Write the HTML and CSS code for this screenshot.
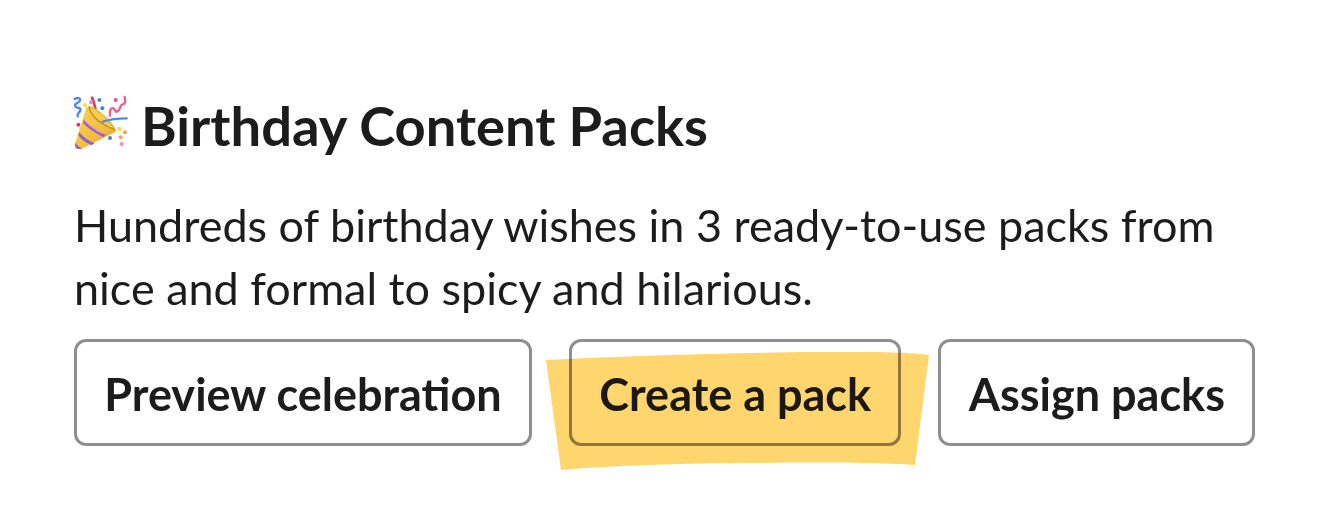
FILE: index.html
```html
<!DOCTYPE html>
<html lang="en">
<head>
    <meta charset="UTF-8">
    <title>Birthday Content Packs</title>
    <link rel="stylesheet" href="styles.css">
</head>
<body>
    <div class="card">
        <h1 class="title">
            <svg class="party-icon" viewBox="30 25 180 165" aria-hidden="true">
                <defs>
                    <linearGradient id="coneFill" x1="0" y1="0" x2="1" y2="1">
                        <stop offset="0" stop-color="#f9d25e"/>
                        <stop offset="0.6" stop-color="#f2bd3e"/>
                        <stop offset="1" stop-color="#dfa12e"/>
                    </linearGradient>
                </defs>
                <!-- streamers behind the cone -->
                <path d="M44 40c10-6 20-2 15 6s-18 8-13 16 18 2 15 12-12 8-8 18" fill="none" stroke="#4a86ea" stroke-width="7" stroke-linecap="round"/>
                <path d="M96 36c8 16 12 42 14 66" fill="none" stroke="#e23a68" stroke-width="8" stroke-linecap="round"/>
                <path d="M150 90c-2-14 2-24 10-22s4 16 14 8 4-18 14-20 8-12 6-22" fill="none" stroke="#ee5d90" stroke-width="7" stroke-linecap="round" stroke-linejoin="round"/>
                <!-- cone -->
                <path d="M44 178L78 68q4-10 14-6c38 18 58 42 73 66q7 12-5 14L60 192q-14 4-16-14z" fill="url(#coneFill)"/>
                <path d="M85 62q40 13 83 73c-26-10-44-18-63-35Q85 78 85 62z" fill="#c2941f"/>
                <path d="M90 65q37 14 72 64c-20-8-38-18-52-31Q92 82 90 65z" fill="#f6cc52"/>
                <path d="M72 102q24 28 66 46l-9 6q-36-18-60-42z" fill="#9560c8"/>
                <path d="M75 104q22 24 56 40l-3 2q-32-15-55-39z" fill="#d98fe0"/>
                <path d="M58 140q18 22 46 33l-9 6q-28-12-40-30z" fill="#9560c8"/>
                <path d="M47 172q6 10 18 17l-8 4q-10-4-12-14z" fill="#9560c8"/>
                <!-- streamer in front -->
                <path d="M128 108c24-8 46-10 72-10" fill="none" stroke="#4a8cf0" stroke-width="7" stroke-linecap="round"/>
                <!-- confetti -->
                <circle cx="75" cy="58" r="6" fill="#f7e23c"/>
                <circle cx="93" cy="50" r="6" fill="#ee88b0"/>
                <circle cx="118" cy="43" r="6" fill="#3f83ea"/>
                <circle cx="127" cy="68" r="6" fill="#3f83ea"/>
                <circle cx="167" cy="43" r="6" fill="#e8508a"/>
                <circle cx="55" cy="117" r="6" fill="#e23a68"/>
                <circle cx="178" cy="130" r="6.5" fill="#f7e23c"/>
                <circle cx="195" cy="140" r="6" fill="#f0a050"/>
                <circle cx="182" cy="155" r="6" fill="#f0a050"/>
                <circle cx="150" cy="157" r="6" fill="#3f83ea"/>
                <circle cx="185" cy="175" r="6.5" fill="#f29ac0"/>
            </svg>
            Birthday Content Packs
        </h1>
        <p class="description">Hundreds of birthday wishes in 3 ready-to-use packs from nice and formal to spicy and hilarious.</p>
        <div class="actions">
            <button class="action-button">Preview celebration</button>
            <div class="highlighted">
                <button class="action-button">Create a pack</button>
                <svg class="marker" viewBox="0 0 383 118" preserveAspectRatio="none" aria-hidden="true">
                    <path d="M0 8C90 3 250-1 320 0c25 0 50 1 63 3l-14 110c-30-2-90-3-160-2-70 0-150 3-194 7z" fill="#ffd56e"/>
                </svg>
            </div>
            <button class="action-button">Assign packs</button>
        </div>
    </div>
</body>
</html>
```

FILE: styles.css
```css
* {
    margin: 0;
    padding: 0;
    box-sizing: border-box;
}

html, body {
    height: 100%;
}

body {
    font-family: Lato, 'Open Sans', sans-serif;
    background: white;
    color: #1d1c1d;
}

.card {
    padding: 95px 0 0 74px;
}

.title {
    display: flex;
    align-items: center;
    gap: 11px;
    height: 60px;
    font-size: 54.3px;
    font-weight: 700;
    line-height: 60px;
}

.party-icon {
    width: 60px;
    height: 55px;
    margin: -8px 0 0 -4px;
}

.description {
    width: 1200px;
    margin-top: 39px;
    font-size: 44.96px;
    line-height: 63px;
}

.actions {
    display: flex;
    gap: 37px;
    margin-top: 19px;
}

.action-button {
    height: 107px;
    padding: 2px 27.3px 0;
    background: white;
    border: 3px solid #8f8f8f;
    border-radius: 12px;
    font-family: inherit;
    font-size: 45px;
    font-weight: 700;
    color: #1d1c1d;
}

.highlighted {
    position: relative;
}

.marker {
    position: absolute;
    left: -23px;
    top: 13px;
    width: 383px;
    height: 118px;
    mix-blend-mode: multiply;
}
```
